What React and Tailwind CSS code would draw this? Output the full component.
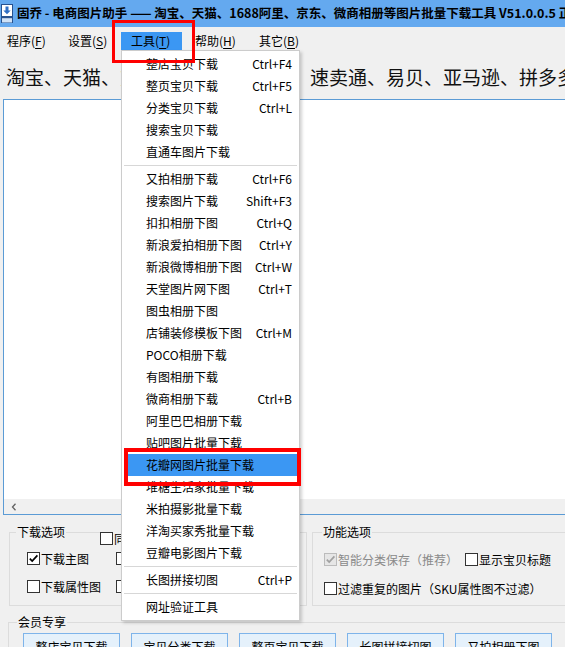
const cjk = "font-['Noto_Sans_CJK_SC','Noto_Sans',sans-serif]";

const menuBar = [
  { label: '程序', key: 'F', w: 'w-[58px] pl-[7px]' },
  { label: '设置', key: 'S', w: 'w-[63px] pl-[10px]' },
  { label: '工具', key: 'T', w: 'w-[61px] pl-[10px]', active: true },
  { label: '帮助', key: 'H', w: 'w-[64px] pl-[13px]' },
  { label: '其它', key: 'B', w: 'w-[64px] pl-[13px]' },
];

const toolItems = [
  ['整店宝贝下载', 'Ctrl+F4'],
  ['整页宝贝下载', 'Ctrl+F5'],
  ['分类宝贝下载', 'Ctrl+L'],
  ['搜索宝贝下载'],
  ['直通车图片下载'],
  'sep',
  ['又拍相册下载', 'Ctrl+F6'],
  ['搜索图片下载', 'Shift+F3'],
  ['扣扣相册下图', 'Ctrl+Q'],
  ['新浪爱拍相册下图', 'Ctrl+Y'],
  ['新浪微博相册下图', 'Ctrl+W'],
  ['天堂图片网下图', 'Ctrl+T'],
  ['图虫相册下图'],
  ['店铺装修模板下图', 'Ctrl+M'],
  ['POCO相册下载'],
  ['有图相册下载'],
  ['微商相册下载', 'Ctrl+B'],
  ['阿里巴巴相册下载'],
  ['贴吧图片批量下载'],
  ['花瓣网图片批量下载', null, true],
  ['堆糖生活家批量下载'],
  ['米拍摄影批量下载'],
  ['洋淘买家秀批量下载'],
  ['豆瓣电影图片下载'],
  'sep',
  ['长图拼接切图', 'Ctrl+P'],
  'sep',
  ['网址验证工具'],
];

const memberButtons = ['整店宝贝下载', '宝贝分类下载', '整页宝贝下载', '长图拼接切图', '又拍相册下图'];

function Check({ checked, disabled }) {
  return (
    <span
      className={
        'flex h-[13px] w-[13px] shrink-0 items-center justify-center border ' +
        (disabled ? 'border-[#bcbcbc] bg-[#e6e6e6]' : 'border-[#333333] bg-white')
      }
    >
      {checked && (
        <svg width="11" height="11" viewBox="0 0 11 11">
          <path
            d="M1.8 5.6 L4.2 8 L9.4 2.4"
            fill="none"
            stroke={disabled ? '#a0a0a0' : '#000'}
            strokeWidth="1.7"
          />
        </svg>
      )}
    </span>
  );
}

function CheckRow({ label, checked, disabled, className = '' }) {
  return (
    <div className={'flex h-[13px] shrink-0 items-center gap-[1px] ' + className}>
      <Check checked={checked} disabled={disabled} />
      <span className={'whitespace-nowrap text-[12px] leading-none ' + (disabled ? 'text-[#8a8a8a]' : 'text-black')}>
        {label}
      </span>
    </div>
  );
}

function ToolsMenu() {
  return (
    <div className="absolute left-[121px] top-[50px] w-[179px] border border-[#cccccc] bg-white pb-[2px] pt-[2px] shadow-[2px_2px_3px_rgba(0,0,0,0.18)]">
      {toolItems.map((item, i) =>
        item === 'sep' ? (
          <div key={i} className="ml-[2px] mr-[2px] flex h-[5px] items-center">
            <div className="h-px w-full bg-[#d7d7d7]" />
          </div>
        ) : (
          <div
            key={i}
            className={
              'ml-[4px] mr-[1px] flex h-[22px] items-center justify-between pl-[20px] pr-[6px] text-[12px] text-black ' +
              (item[2] ? 'bg-[#3b97f3]' : '')
            }
          >
            <span className="whitespace-nowrap">{item[0]}</span>
            {item[1] && <span className="whitespace-nowrap">{item[1]}</span>}
          </div>
        )
      )}
    </div>
  );
}

export default function App() {
  return (
    <div className={'relative h-[647px] w-[565px] overflow-hidden bg-[#f0f0f0] ' + cjk}>
      {/* title bar */}
      <div className="flex h-[27px] items-center overflow-hidden bg-[#64a9ef]">
        <svg width="12" height="19" viewBox="0 0 12 19" className="ml-[1px] shrink-0">
          <rect x="0.5" y="0.5" width="11" height="18" fill="#ffffff" stroke="#27528f" />
          <path d="M4.5 2.5h3v4h2.2L6 10.3 2.3 6.5h2.2z" fill="#2f6fc4" />
          <rect x="1" y="12" width="10" height="2.5" fill="#27528f" />
          <rect x="1" y="14.5" width="10" height="4" fill="#cfe2f7" />
        </svg>
        <div className="ml-[4px] whitespace-nowrap text-[12.5px] font-bold text-black">
          固乔 - 电商图片助手 —— 淘宝、天猫、1688阿里、京东、微商相册等图片批量下载工具 V51.0.0.5 正式版
        </div>
      </div>

      {/* menu bar */}
      <div className="flex h-[24px] text-[12px] text-black">
        {menuBar.map((m) => (
          <div
            key={m.key}
            className={'mt-[5px] flex h-[18px] items-center ' + m.w + (m.active ? ' bg-[#3b97f3]' : '')}
          >
            {m.label}(<span className="underline underline-offset-2">{m.key}</span>)
          </div>
        ))}
      </div>

      {/* platform strip */}
      <div className="flex h-[48px] items-center overflow-hidden whitespace-nowrap pl-[6px] pt-[5px] text-[19px] text-[#111]">
        淘宝、天猫、京东、苏宁、唯品会、速卖通、易贝、亚马逊、拼多多等
      </div>

      {/* log box */}
      <div className="ml-[3px] flex h-[416px] flex-col border border-r-0 border-[#5b9bd5] bg-white">
        <div className="flex-1" />
        <div className="flex h-[15px] items-center bg-[#f0f0f0] pl-[7px]">
          <svg width="6" height="8" viewBox="0 0 6 8">
            <path d="M4.5 0.8 L1.5 4 L4.5 7.2" fill="none" stroke="#606060" strokeWidth="1.3" />
          </svg>
        </div>
      </div>

      {/* option groups */}
      <div className="mt-[9px] flex text-[12px]">
        <fieldset className="relative ml-[9px] h-[82px] w-[298px] shrink-0 border border-[#dcdcdc]">
          <legend className="ml-[6px] px-[1px] leading-[16px]">下载选项</legend>
          <div className="absolute left-[90px] top-[-8px] flex items-center bg-[#f0f0f0] pr-[2px]">
            <CheckRow label="同步下载详情图" />
          </div>
          <div className="flex flex-col gap-[15px] pl-[17px] pt-[12px]">
            <div className="flex">
              <CheckRow className="w-[89px]" label="下载主图" checked />
              <CheckRow label="下载详情图" />
            </div>
            <div className="flex">
              <CheckRow className="w-[89px]" label="下载属性图" />
              <CheckRow label="下载视频" />
            </div>
          </div>
        </fieldset>
        <fieldset className="ml-[5px] h-[82px] w-[270px] shrink-0 border border-[#dcdcdc]">
          <legend className="ml-[9px] px-[1px] leading-[16px]">功能选项</legend>
          <div className="flex flex-col gap-[16px] pl-[11px] pt-[13px]">
            <div className="flex">
              <CheckRow className="w-[141px]" label="智能分类保存（推荐）" checked disabled />
              <CheckRow label="显示宝贝标题" />
            </div>
            <CheckRow label="过滤重复的图片（SKU属性图不过滤）" />
          </div>
        </fieldset>
      </div>

      <fieldset className="ml-[8px] mt-[8px] h-[60px] w-[570px] border border-[#dcdcdc] text-[12px]">
        <legend className="ml-[8px] px-[1px] leading-[16px]">会员专享</legend>
        <div className="flex gap-[11px] pl-[14px] pt-[3px]">
          {memberButtons.map((b) => (
            <button
              key={b}
              className="flex h-[28px] w-[97px] shrink-0 items-center justify-center border border-[#7eb4ea] bg-[#e5f1fb] text-[12px] text-black"
            >
              {b}
            </button>
          ))}
        </div>
      </fieldset>

      <ToolsMenu />

      {/* annotation boxes */}
      <div className="pointer-events-none absolute left-[112px] top-[20px] h-[43px] w-[83px] border-[3px] border-[#ff0000]" />
      <div className="pointer-events-none absolute left-[124px] top-[448px] h-[38px] w-[177px] border-[4px] border-[#ff0000]" />
    </div>
  );
}
